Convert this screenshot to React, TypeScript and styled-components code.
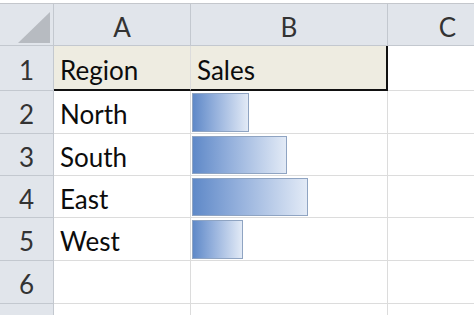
import React from "react";
import styled, { createGlobalStyle } from "styled-components";

const Global = createGlobalStyle`
  html, body { margin: 0; padding: 0; background: #ffffff; }
  body { font-family: Lato, "Open Sans", sans-serif; overflow: hidden; }
`;

const Page = styled.div`
  width: 474px;
  height: 315px;
  overflow: hidden;
  display: flex;
  flex-direction: column;
`;

const TopStrip = styled.div`
  height: 4px;
  flex: 0 0 4px;
  box-sizing: border-box;
  background: #ffffff;
  border-bottom: 1px solid #c4c7cc;
`;

const Sheet = styled.div`
  display: grid;
  grid-template-columns: 54px 137px 197px 120px;
  grid-template-rows: 42px 45px 43px 42px 42px 43px 43px 30px;
`;

const Cell = styled.div<{ $head?: boolean; $title?: boolean; $edgeRight?: boolean; $align?: string }>`
  box-sizing: border-box;
  position: relative;
  display: flex;
  align-items: center;
  justify-content: ${(p) => p.$align || "flex-start"};
  padding: 4px 0 0 ${(p) => (p.$align ? "0" : "6px")};
  font-size: 26px;
  line-height: 1;
  color: ${(p) => (p.$head ? "#333333" : "#0c0c0c")};
  background: ${(p) => (p.$head ? "#e1e5eb" : p.$title ? "#eeece1" : "#ffffff")};
  border-right: ${(p) =>
    p.$edgeRight ? "2px solid #111111" : p.$head ? "1px solid #c3c8cf" : "1px solid #dcdcdc"};
  border-bottom: ${(p) =>
    p.$title ? "2px solid #111111" : p.$head ? "1px solid #c3c8cf" : "1px solid #dcdcdc"};
`;

const Corner = styled(Cell)`
  padding: 0;
`;

const Triangle = styled.div`
  position: absolute;
  right: 3px;
  bottom: 2px;
  width: 0;
  height: 0;
  border-left: 32px solid transparent;
  border-bottom: 31px solid #b7bbc1;
`;

const BarCell = styled(Cell)`
  padding: 2px 0 1px 1px;
  align-items: stretch;
`;

const Bar = styled.div`
  box-sizing: border-box;
  height: 100%;
  border: 1px solid #8fa4c2;
  background: linear-gradient(to right, #5f89c8 0%, #94b0dc 40%, #e2eaf6 100%);
`;

const rows = [
  { region: "North", w: 57 },
  { region: "South", w: 95 },
  { region: "East", w: 116 },
  { region: "West", w: 51 },
];

export default function App() {
  return (
    <Page>
      <Global />
      <TopStrip />
      <Sheet>
        <Corner $head>
          <Triangle />
        </Corner>
        <Cell $head $align="center">A</Cell>
        <Cell $head $align="center">B</Cell>
        <Cell $head $align="center">C</Cell>

        <Cell $head $align="center">1</Cell>
        <Cell $title>Region</Cell>
        <Cell $title $edgeRight>Sales</Cell>
        <Cell />

        {rows.map((r, i) => (
          <React.Fragment key={r.region}>
            <Cell $head $align="center">{i + 2}</Cell>
            <Cell>{r.region}</Cell>
            <BarCell>
              <Bar style={{ width: r.w }} />
            </BarCell>
            <Cell />
          </React.Fragment>
        ))}

        <Cell $head $align="center">6</Cell>
        <Cell />
        <Cell />
        <Cell />

        <Cell $head />
        <Cell />
        <Cell />
        <Cell />
      </Sheet>
    </Page>
  );
}
